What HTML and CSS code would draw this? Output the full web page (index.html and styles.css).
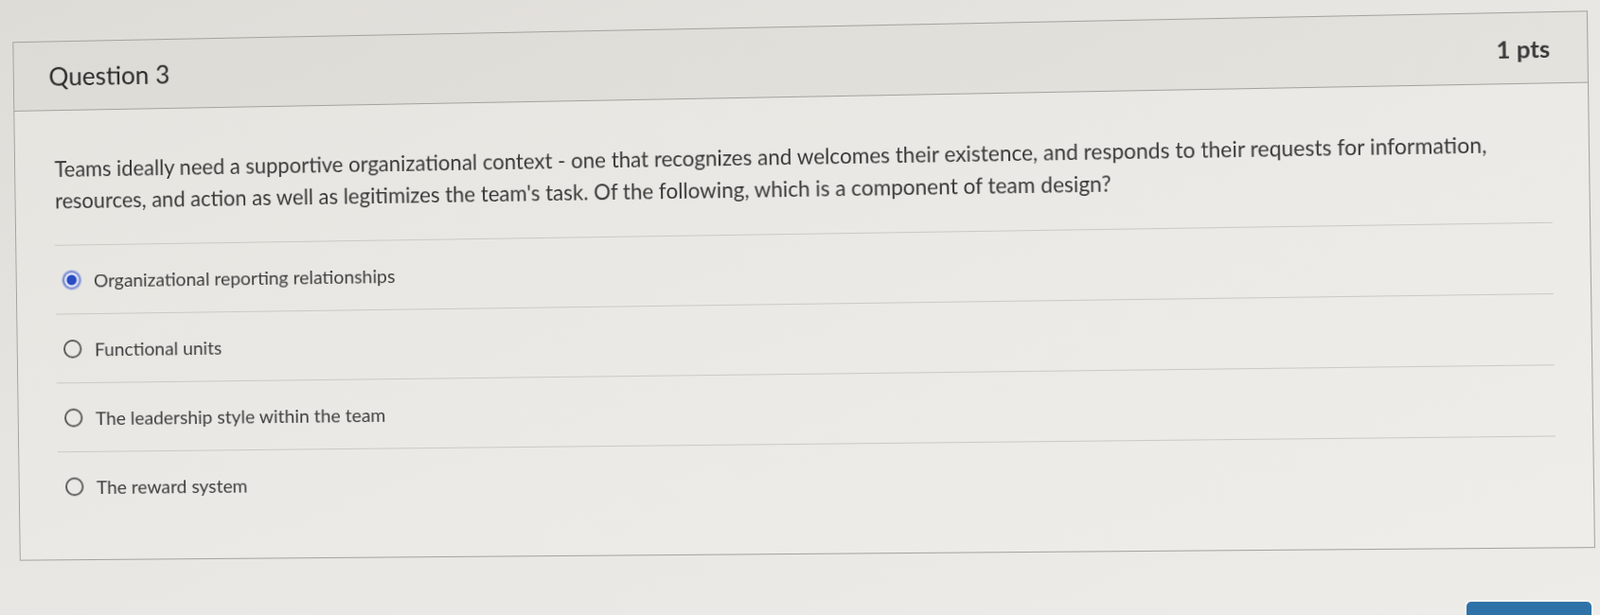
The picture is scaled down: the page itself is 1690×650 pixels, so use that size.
FILE: index.html
```html
<!DOCTYPE html>
<html lang="en">
<head>
<meta charset="utf-8">
<title>Question 3</title>
<link rel="stylesheet" href="styles.css">
</head>
<body>
<div class="page">
  <div class="card-frame">
    <div class="question-card">
      <div class="question-header">
        <span class="question-name">Question 3</span>
        <span class="question-points">1 pts</span>
      </div>
      <div class="question-body">
        <p class="question-text">Teams ideally need a supportive organizational context - one that recognizes and welcomes their existence, and responds to their requests for information, resources, and action as well as legitimizes the team's task. Of the following, which is a component of team design?</p>
        <div class="answers">
          <label class="answer"><span class="radio checked"></span><span class="answer-text">Organizational reporting relationships</span></label>
          <label class="answer"><span class="radio"></span><span class="answer-text">Functional units</span></label>
          <label class="answer"><span class="radio"></span><span class="answer-text">The leadership style within the team</span></label>
          <label class="answer"><span class="radio"></span><span class="answer-text">The reward system</span></label>
        </div>
      </div>
    </div>
  </div>
  <div class="footer">
    <button class="next-button" type="button" aria-label="Next"></button>
  </div>
</div>
</body>
</html>
```

FILE: styles.css
```css
html, body {
  margin: 0;
  padding: 0;
  height: 650px;
  overflow: hidden;
}

body {
  background: linear-gradient(160deg, #dedcd7 0%, #e7e6e2 45%, #edece8 100%);
  font-family: Lato, "Open Sans", "Liberation Sans", sans-serif;
  color: #333333;
}

.page {
  padding: 24px 7px 0 12px;
}

/* the reference is a photo of a screen taken at a slight angle;
   the frame keeps a transparent margin so the card edges stay smooth */
.card-frame {
  width: 1673px;
  padding: 4px;
  box-sizing: border-box;
  transform: translateX(-14px) perspective(2000px) rotateY(-2.4deg) rotate(-0.8deg);
}

.question-card {
  box-sizing: border-box;
  width: 1665px;
  border: 1px solid #a3a29d;
  background: linear-gradient(160deg, #e5e4df 0%, #eae9e5 50%, #eeede9 100%);
}

.question-header {
  box-sizing: border-box;
  height: 74px;
  display: flex;
  align-items: center;
  justify-content: space-between;
  padding: 0 38px 0 38px;
  background: linear-gradient(160deg, #dcdbd6 0%, #e3e2dd 100%);
  border-bottom: 1px solid #a3a29d;
}

.question-name {
  font-size: 27px;
  font-weight: 400;
  color: #2a2a2a;
}

.question-points {
  font-size: 25px;
  font-weight: 700;
  color: #383838;
}

.question-body {
  padding: 46px 38px 42px 42px;
}

.question-text {
  margin: 0 0 30px 1px;
  font-size: 22.5px;
  line-height: 34px;
  color: #383838;
}

.answer {
  box-sizing: border-box;
  height: 74px;
  display: flex;
  align-items: center;
  gap: 14px;
  padding-left: 8px;
  border-top: 1px solid #cac9c4;
}

.radio {
  box-sizing: border-box;
  flex: none;
  width: 20px;
  height: 20px;
  border-radius: 50%;
  border: 2px solid #595959;
}

.radio.checked {
  border: 2px solid #7d8fd2;
  background: radial-gradient(circle, #2a4cc2 0 5px, #d9def2 5.8px);
  box-shadow: 0 0 0 1px #b7c0e4;
}

.answer-text {
  font-size: 19.8px;
  color: #3e3e3e;
}

.footer {
  display: flex;
  justify-content: flex-end;
  margin-top: 44px;
}

.next-button {
  width: 136px;
  height: 40px;
  border: 2px solid #f3f3f1;
  border-radius: 7px;
  background: #2f72a8;
  padding: 0;
}
```
